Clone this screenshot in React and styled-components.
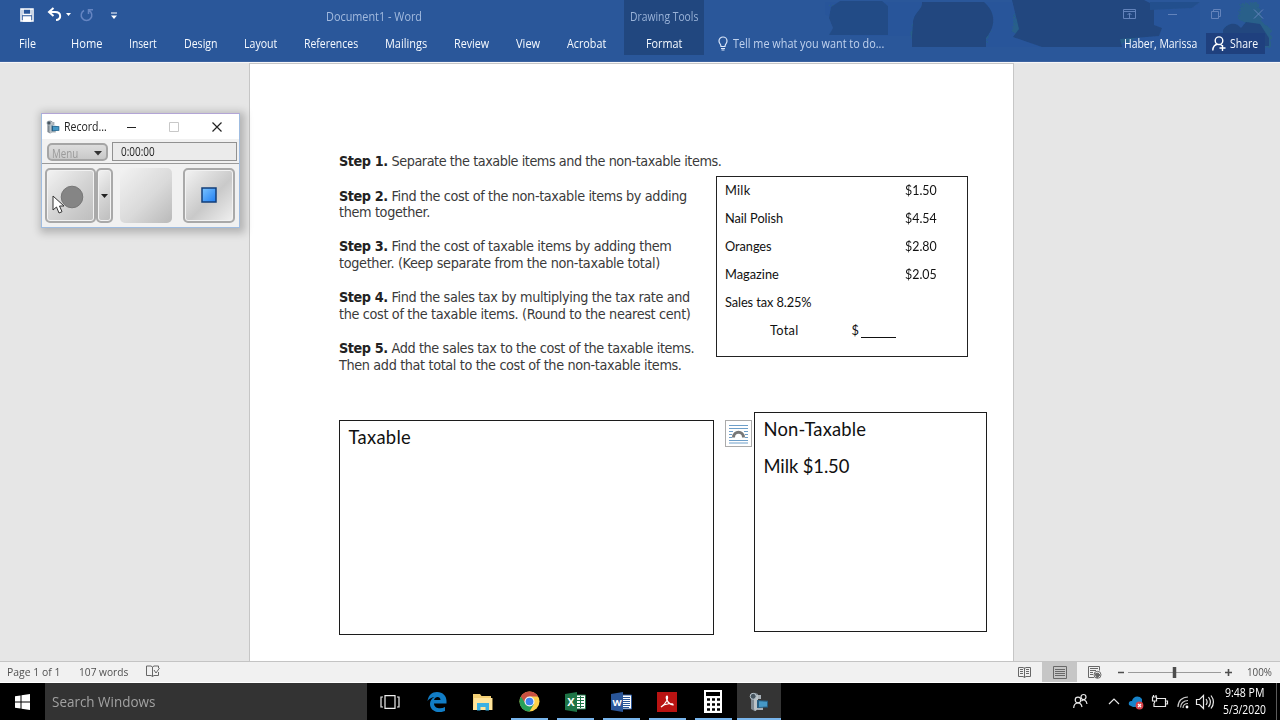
import React, { useLayoutEffect, useRef, useState } from "react";
import styled, { createGlobalStyle } from "styled-components";

const GlobalStyle = createGlobalStyle`
  * { box-sizing: border-box; }
  html, body { margin: 0; padding: 0; }
  body { width: 1280px; height: 720px; overflow: hidden; }
  svg { display: block; flex: none; }
`;

const ui = `"Open Sans", "Noto Sans", sans-serif`;
const body = `Lato, "Open Sans", sans-serif`;

/* Text run set to a fixed advance width: condensed when too wide, tracked otherwise */
const Run = styled.span`
  display: inline-block;
  white-space: pre;
  flex: none;
`;
const Glyphs = styled.span`
  display: inline-block;
  transform-origin: 0 50%;
`;
function Fit({ w, tracked, children, className }) {
  const ref = useRef(null);
  const [fitted, setFitted] = useState({});
  useLayoutEffect(() => {
    const el = ref.current;
    const natural = el.offsetWidth;
    if (!tracked && w / natural < 0.97) {
      setFitted({ transform: `scaleX(${w / natural})` });
    } else {
      setFitted({ letterSpacing: (w - natural) / el.textContent.length });
    }
  }, []);
  return (
    <Run className={className} style={{ width: w }}>
      <Glyphs ref={ref} style={fitted}>{children}</Glyphs>
    </Run>
  );
}

const Screen = styled.div`
  position: relative;
  width: 1280px;
  height: 720px;
  display: flex;
  flex-direction: column;
  overflow: hidden;
  font-family: ${ui};
  font-size: 12px;
`;

/* ---------- Ribbon ---------- */
const Ribbon = styled.header`
  position: relative;
  height: 62px;
  flex: none;
  background: #2a579a;
  color: #f6faff;
  border-bottom: 1px solid #3b62a0;
`;
const Smudges = styled.svg`
  position: absolute;
  left: 800px;
  top: 0;
`;
const RibbonContent = styled.div`
  position: relative;
  display: flex;
  height: 61px;
`;
const RibbonLeft = styled.div`
  width: 624px;
  display: flex;
  flex-direction: column;
`;
const TitleRow = styled.div`
  height: 31px;
  display: flex;
  align-items: center;
  padding-left: 20px;
`;
const Quick = styled.div`
  display: flex;
  align-items: center;
  width: 306px;
  height: 30px;
  padding-bottom: 2px;
`;
const DocTitle = styled.div`
  color: #a3bbdf;
  line-height: 16px;
  padding-top: 2px;
`;
const Tabs = styled.nav`
  display: flex;
  gap: 26.9px;
  padding: 5px 0 0 19px;
  line-height: 16px;
`;
const Tab = styled(Fit)`
  &:first-child { margin-right: 8px; }
`;
const ContextTab = styled.div`
  width: 80px;
  height: 55px;
  background: #21477f;
  display: flex;
  flex-direction: column;
  align-items: center;
  line-height: 16px;
  padding-top: 9px;
  gap: 11px;
`;
const Dim = styled.span`
  color: #9ab3d8;
`;
const RibbonRight = styled.div`
  flex: 1;
  display: flex;
  flex-direction: column;
`;
const WindowButtons = styled.div`
  height: 33px;
  display: flex;
  justify-content: flex-end;
  padding: 8px 15px 0 0;
`;
const Account = styled.div`
  display: flex;
  align-items: center;
  height: 21px;
  padding-left: 13px;
`;
const TellMe = styled.div`
  display: flex;
  align-items: center;
  gap: 4px;
  width: 407px;
  color: #c0d2ee;
`;
const Share = styled.div`
  display: flex;
  align-items: center;
  gap: 4px;
  margin-left: 9px;
  width: 59px;
  height: 21px;
  padding-left: 6px;
  background: #1f407e;
`;

/* ---------- Document ---------- */
const Workspace = styled.main`
  height: 599px;
  flex: none;
  padding-left: 249px;
  background: #e6e6e6;
  border-top: 1px solid #f6f6f8;
`;
const Page = styled.article`
  width: 765px;
  height: 598px;
  background: #fff;
  border: 1px solid #c6c6c6;
  border-bottom: 0;
  padding: 89px 26px 0 89px;
`;
const Upper = styled.section`
  display: flex;
  height: 259px;
`;
const Steps = styled.div`
  width: 377px;
  flex: none;
  font: 14.3px/16.3px "DejaVu Sans Condensed", "DejaVu Sans", sans-serif;
  font-stretch: condensed;
  color: #3a3a3a;
`;
const Step = styled.p`
  margin: 0 0 18.3px;
  display: flex;
  flex-direction: column;
  align-items: flex-start;
`;
const Line = styled.span`
  display: flex;
  height: 16.3px;
`;
const StepName = styled(Fit)`
  font-weight: 700;
  color: #222;
`;
const Receipt = styled.div`
  width: 252px;
  height: 181px;
  margin-top: 23px;
  flex: none;
  border: 1px solid #222;
  padding: 5px 30px 0 8px;
  font: 12.8px/16px ${body};
  color: #111;
`;
const Item = styled.div`
  display: flex;
  justify-content: space-between;
  height: 28.1px;
`;
const Total = styled.div`
  display: flex;
  padding-left: 45px;
  gap: 53px;
`;
const Blank = styled.span`
  display: inline-block;
  width: 35px;
  height: 12px;
  margin-left: 2px;
  vertical-align: -3px;
  border-bottom: 1px solid #111;
`;
const Lower = styled.section`
  display: flex;
  align-items: flex-start;
`;
const SortBox = styled.div`
  width: ${(p) => p.$w}px;
  height: ${(p) => p.$h}px;
  margin-top: ${(p) => p.$top}px;
  border: 1px solid #1c1c1c;
  padding: 4px 9px 0 8.5px;
  font: 18.4px/24px ${body};
  color: #111;
  display: flex;
  flex-direction: column;
  align-items: flex-start;
  gap: 13px;
  flex: none;
`;
const LayoutOptions = styled.div`
  width: 27px;
  height: 27px;
  margin: 8px 2px 0 11px;
  border: 1px solid #ababab;
  background: #fff;
  padding: 2px;
  flex: none;
`;

/* ---------- Status bar ---------- */
const StatusBar = styled.footer`
  height: 22px;
  flex: none;
  background: #f1f1f1;
  border-top: 1px solid #c4c4c4;
  border-bottom: 1px solid #fff;
  display: flex;
  align-items: center;
  padding-left: 7px;
  font-size: 11px;
  color: #505050;
`;
const StatusLeft = styled.div`
  display: flex;
  align-items: center;
  gap: 19px;
  width: 1000px;
  flex: none;
  padding-bottom: 1px;
`;
const ViewButton = styled.div`
  width: 35px;
  height: 20px;
  flex: none;
  display: flex;
  align-items: center;
  justify-content: center;
  background: ${(p) => (p.$on ? "#c6c6c6" : "transparent")};
`;
const Zoom = styled.div`
  display: flex;
  align-items: center;
  margin-left: 3px;
  gap: 14px;
  padding-bottom: 1px;
`;

/* ---------- Taskbar ---------- */
const Taskbar = styled.footer`
  height: 37px;
  flex: none;
  display: flex;
  background: #000;
  color: #fff;
`;
const Start = styled.div`
  width: 45px;
  padding: 11px 0 0 15px;
`;
const Search = styled.div`
  width: 322px;
  margin-right: 2px;
  background: #333;
  color: #a2a2a2;
  font-size: 14.5px;
  line-height: 37px;
  padding-left: 7px;
`;
const Slot = styled.div`
  width: 46px;
  display: flex;
  align-items: center;
  justify-content: center;
  background: ${(p) => (p.$active ? "#343434" : "transparent")};
  background-clip: content-box;
  padding: 0 2px 0 0;
  position: relative;
  &::after {
    content: "";
    display: ${(p) => (p.$open ? "block" : "none")};
    position: absolute;
    bottom: 0;
    left: ${(p) => (p.$active ? 0 : 4)}px;
    right: ${(p) => (p.$active ? 2 : 5)}px;
    height: 2px;
    background: #78b5ec;
  }
`;
const Tray = styled.div`
  flex: 1;
  display: flex;
  align-items: center;
  padding-left: 290px;
`;
const Clock = styled.div`
  width: 60px;
  height: 37px;
  flex: none;
  display: flex;
  flex-direction: column;
  align-items: center;
  justify-content: center;
  line-height: 17px;
  padding: 0 4px 2px 0;
  border-right: 1px solid #5a5a5a;
  font-size: 12px;
`;

/* ---------- Recorder window ---------- */
const Recorder = styled.div`
  position: absolute;
  left: 41px;
  top: 113px;
  width: 199px;
  height: 115px;
  border: 1px solid #9fbce0;
  border-top-color: #b3a5d6;
  background: #f1f1f1;
  box-shadow: 2px 2px 8px 3px rgba(0, 0, 0, 0.22);
  color: #222;
`;
const RecTitle = styled.div`
  height: 25px;
  background: #fff;
  display: flex;
  align-items: center;
  padding-left: 4px;
  svg:first-child { margin-right: 4px; }
`;
const RecBar = styled.div`
  height: 25px;
  border-bottom: 1px solid #9a9a9a;
  display: flex;
  align-items: flex-start;
  padding: 3px 2px 0 5px;
  gap: 4px;
`;
const Menu = styled.div`
  width: 61px;
  height: 18px;
  margin-top: 1px;
  border: 2px solid #a5a5a5;
  border-radius: 5px;
  background: linear-gradient(#ddd, #c9c9c9);
  color: #9a9a9a;
  display: flex;
  align-items: center;
  justify-content: space-between;
  padding: 2px 4px 0 3px;
`;
const Timer = styled.div`
  width: 126px;
  height: 19px;
  border: 1px solid #919191;
  background: #ebebeb;
  padding-left: 8px;
  line-height: 17px;
`;
const RecButtons = styled.div`
  display: flex;
  padding: 4px 3px 0;
`;
const RecButton = styled.div`
  width: ${(p) => p.$w}px;
  height: 55px;
  margin-left: ${(p) => p.$gap || 0}px;
  border: ${(p) => (p.$flat ? 0 : 2)}px solid #a9a9a9;
  border-radius: 5px;
  background: linear-gradient(135deg, #f3f3f3, ${(p) => p.$mid || "#d2d2d2"} 55%, ${(p) => p.$end || "#bdbdbd"});
  box-shadow: ${(p) => (p.$flat ? "none" : "inset 0 0 0 1px #f2f2f2")};
  display: flex;
  align-items: center;
  justify-content: center;
`;
const Pointer = styled.svg`
  position: absolute;
  left: 52px;
  top: 195px;
`;

function Camcorder({ size }) {
  return (
    <svg width={size} height={size} viewBox="0 0 20 20">
      <path d="M2 2.5 6 .8 9 2v15l-3 2.2L2 17z" fill="#7d8891" />
      <path d="M5 3h4v14l-3 2-1-2z" fill="#bac2c7" />
      <circle cx="4.2" cy="4.3" r="3" fill="#475560" stroke="#bac6ce" />
      <path d="M9 3h3v4H9zM9 15h5v3H8z" fill="#a6afb6" />
      <path d="m8 8 11 .8v6.7L8 16z" fill="#265d82" />
      <path d="m10 9.2 8 .6v4.8l-8 .3z" fill="#4598c6" />
    </svg>
  );
}

function RibbonBar() {
  return (
    <Ribbon>
      <Smudges width="480" height="61">
        <defs>
          <filter id="rough" x="-10%" y="-10%" width="120%" height="120%">
            <feTurbulence type="fractalNoise" baseFrequency=".45" numOctaves="2" seed="4" />
            <feDisplacementMap in="SourceGraphic" scale="7" />
          </filter>
          <filter id="soft"><feGaussianBlur stdDeviation=".6" /></filter>
        </defs>
        <path d="M25 2H400V47H112V36H50V28L25 14z" fill="#28559a" />
        <g filter="url(#rough)">
          <path d="M32 5h50v18H31zM123 6l60-2 8 17-3 19-10 4h-63l-5-12zM218 3h132v30l-25 10H235l-23-11zM442 3h16l5 20 8 6v18h-24V24l-9-5z" fill="#24677d" opacity=".55" />
        </g>
        <g filter="url(#soft)">
          <path d="M31 7 40 1h42l6 5v29H29l4-7-4-10z" fill="#234b86" />
          <path d="M113 24c0-12 10-14 9-22h62c15 13 9 28 2 36v9h-74V36z" fill="#21477f" />
          <path d="M212 0h132l10 5v20l8 3-3 8-39 3 2 8h-80l-29-10 6-8z" fill="#21477f" />
          <path d="M350 2h50l-8 6-42 2z" fill="#24508d" />
          <path d="M423 30c4-7 13-9 18-2l5-6 14 2 9 14v8h-46z" fill="#21477f" />
        </g>
      </Smudges>
      <RibbonContent>
        <RibbonLeft>
          <TitleRow>
            <Quick>
              <svg width="14" height="14" viewBox="0 0 14 14" fill="none" stroke="#fff" strokeWidth="1.5">
                <path d="M1 1h12v12H1zM3 1v5.5h8V1" /><path d="M3.5 9h7v4h-7zM5.5 11v2" fill="#fff" />
              </svg>
              <svg width="24" height="16" viewBox="0 0 24 16" style={{ marginLeft: 13 }}>
                <path d="M6.500 1 2 5l4.500 4M2.500 5H8c7 0 6.500 8 1 8" fill="none" stroke="#fff" strokeWidth="2" />
                <path d="M19 6h5l-2.500 3z" fill="#fff" />
              </svg>
              <svg width="14" height="14" viewBox="0 0 14 14" style={{ marginLeft: 9 }}>
                <path d="M4 2.500a5.300 5.300 0 1 0 5 0M8.500 6V1.700H13" fill="none" stroke="#6585c2" strokeWidth="1.500" />
              </svg>
              <svg width="8" height="8" viewBox="0 0 8 8" style={{ marginLeft: 16, marginTop: 3 }}>
                <path d="M1 1h6" stroke="#fff" /><path d="M1 3.500h6L4 7z" fill="#fff" />
              </svg>
            </Quick>
            <DocTitle><Fit w={96}>Document1 - Word</Fit></DocTitle>
          </TitleRow>
          <Tabs>
            <Tab w={17}>File</Tab><Tab w={31.5}>Home</Tab><Tab w={27.5}>Insert</Tab>
            <Tab w={33.5}>Design</Tab><Tab w={33.5}>Layout</Tab><Tab w={54}>References</Tab>
            <Tab w={42}>Mailings</Tab><Tab w={35}>Review</Tab><Tab w={24}>View</Tab><Tab w={39.5}>Acrobat</Tab>
          </Tabs>
        </RibbonLeft>
        <ContextTab>
          <Dim><Fit w={68}>Drawing Tools</Fit></Dim>
          <Fit w={36}>Format</Fit>
        </ContextTab>
        <RibbonRight>
          <WindowButtons>
            <svg width="142" height="14" viewBox="0 0 142 14" fill="none" stroke="#6383bb">
              <path d="M.5 1.500h12v9H.5zM.5 3.500h12M6.500 10V5M4.500 7l2-2 2 2M45 6.500h9M88.500 3.500h7v7h-7zM90.500 3V1.500h7v7H96M131 1.500l9 9M140 1.500l-9 9" />
            </svg>
          </WindowButtons>
          <Account>
            <TellMe>
              <svg width="12" height="15" viewBox="0 0 12 15" fill="none" stroke="#dce8fb" strokeWidth="1.200">
                <path d="M4 10.500C4 8 2 7.500 2 5a4 4 0 0 1 8 0c0 2.500-2 3-2 5.500zM4 12.500h4M4.500 14h3" />
              </svg>
              <Fit w={151}>Tell me what you want to do...</Fit>
            </TellMe>
            <Fit w={73}>Haber, Marissa</Fit>
            <Share>
              <svg width="14" height="15" viewBox="0 0 14 15" fill="none" stroke="#fff" strokeWidth="1.400">
                <circle cx="7" cy="4.700" r="3.800" /><path d="M.8 14.500c.2-4 2.200-6 5-6.200M8.500 8.500l1.500 1M10.500 9v6M7.500 12h6" />
              </svg>
              <Fit w={28}>Share</Fit>
            </Share>
          </Account>
        </RibbonRight>
      </RibbonContent>
    </Ribbon>
  );
}

const STEPS = [
  [["Separate the taxable items and the non-taxable items.", 330]],
  [["Find the cost of the non-taxable items by adding", 295.5], ["them together.", 91]],
  [["Find the cost of taxable items by adding them", 279.5], ["together. (Keep separate from the non-taxable total)", 321.5]],
  [["Find the sales tax by multiplying the tax rate and", 298], ["the cost of the taxable items. (Round to the nearest cent)", 352]],
  [["Add the sales tax to the cost of the taxable items.", 302.5], ["Then add that total to the cost of the non-taxable items.", 343]],
];
const ITEMS = [
  ["Milk", 25, "$1.50"], ["Nail Polish", 58.5, "$4.54"], ["Oranges", 46.5, "$2.80"],
  ["Magazine", 54, "$2.05"], ["Sales tax 8.25%", 86.5, null],
];

function Document() {
  return (
    <Workspace>
      <Page>
        <Upper>
          <Steps>
            {STEPS.map((lines, i) => (
              <Step key={i}>
                {lines.map(([text, w], n) => (
                  <Line key={n}>
                    {n === 0 && <StepName tracked w={52.5}>{`Step ${i + 1}. `}</StepName>}
                    <Fit tracked w={w}>{text}</Fit>
                  </Line>
                ))}
              </Step>
            ))}
          </Steps>
          <Receipt>
            {ITEMS.map(([name, w, price]) => (
              <Item key={name}><Fit w={w}>{name}</Fit>{price && <Fit w={32}>{price}</Fit>}</Item>
            ))}
            <Total><Fit w={28.5}>Total</Fit><span>$<Blank /></span></Total>
          </Receipt>
        </Upper>
        <Lower>
          <SortBox $w={375} $h={215} $top={8}><Fit w={63}>Taxable</Fit></SortBox>
          <LayoutOptions>
            <svg width="21" height="21" viewBox="0 0 21 21">
              <path d="M1 2.500h19M1 5.500h19M1 8.500h4M16 8.500h4M1 11.500h3M17 11.500h3M1 14.500h3M17 14.500h3M1 17.500h19M1 20h19" stroke="#6e9fc9" />
              <path d="M5.500 14.500c0-7 10-7 10 0" fill="none" stroke="#777" strokeWidth="3" />
            </svg>
          </LayoutOptions>
          <SortBox $w={233} $h={220} $top={0}>
            <Fit w={103}>Non-Taxable</Fit>
            <Fit w={86}>Milk $1.50</Fit>
          </SortBox>
        </Lower>
      </Page>
    </Workspace>
  );
}

function Status() {
  return (
    <StatusBar>
      <StatusLeft>
        <Fit w={53}>Page 1 of 1</Fit>
        <Fit w={49}>107 words</Fit>
        <svg width="14" height="13" viewBox="0 0 14 13" fill="none" stroke="#666" style={{ marginLeft: -1 }}>
          <path d="M6.500 2v9.500M6.500 2 5 1H.5v9.500H5l1.500 1M6.500 2 8 1h4.500v2M8 5l2 3 3.500-5M8 10.500h4.500V7M6.500 11.500l1.500-1" />
        </svg>
      </StatusLeft>
      <ViewButton>
        <svg width="13" height="12" viewBox="0 0 13 12" fill="none" stroke="#686868">
          <path d="M6.500 1.500v10L5 10.500H.5v-9H5l1.500 1 1.500-1h4.500v9H8l-1.500 1M2 3.500h3M2 5.500h3M2 7.500h3M8 3.500h3M8 5.500h3M8 7.500h3" />
        </svg>
      </ViewButton>
      <ViewButton $on>
        <svg width="14" height="13" viewBox="0 0 14 13" fill="none" stroke="#686868">
          <path d="M.5.5h13v12H.5zM2 3.500h10M2 5.500h10M2 7.500h10M2 9.500h10" />
        </svg>
      </ViewButton>
      <ViewButton>
        <svg width="14" height="13" viewBox="0 0 14 13" fill="none" stroke="#686868">
          <path d="M6 11.500H.5V.5h11v4M2 2.500h8M2 4.500h6M2 6.500h3M2 8.500h3" /><circle cx="9.500" cy="8.800" r="3.500" /><path d="m7 8 3-1 2 2-3 3z" fill="#686868" />
        </svg>
      </ViewButton>
      <Zoom>
        <svg width="118" height="12" viewBox="0 0 118 12" stroke="#4d4d4d">
          <path d="M3 6.500h6M110 6.500h7M113.500 3v7" strokeWidth="1.600" />
          <path d="M13 6.500h93" stroke="#9a9a9a" /><path d="M59.500 1v11" strokeWidth="3.500" />
        </svg>
        <Fit w={25}>100%</Fit>
      </Zoom>
    </StatusBar>
  );
}

function OfficeIcon({ color, letter }) {
  return (
    <svg width="21" height="20" viewBox="0 0 21 20">
      <path d="M10 3h10.500v14H10z" fill="#fff" stroke={color} />
      <path d={letter === "X" ? "M12 5.500h7M12 8.500h7M12 11.500h7M12 14.500h7M15.500 4v12" : "M12 5.500h7M12 7.500h7M12 9.500h7M12 11.500h7M12 13.500h7M12 15.500h6"} stroke={color} />
      <path d="m0 2 12-2v20L0 18z" fill={color} />
      <text x="6" y="14" textAnchor="middle" fontFamily="Open Sans" fontWeight="700" fontSize={letter === "X" ? 11 : 9.5} fill="#fff">{letter}</text>
    </svg>
  );
}

function WindowsBar() {
  return (
    <Taskbar>
      <Start>
        <svg width="15" height="16" viewBox="0 0 15 16" fill="#fff">
          <path d="m0 2.300 5.500-.8v6H0zM6.500 1.300 15 0v7.500H6.500zM0 8.500h5.500v6L0 13.700zM6.500 8.500H15V16l-8.500-1.300z" />
        </svg>
      </Start>
      <Search><Fit w={103}>Search Windows</Fit></Search>
      <Slot>
        <svg width="20" height="14" viewBox="0 0 20 14" fill="none" stroke="#eee" strokeWidth="1.200" style={{ marginRight: 2 }}>
          <path d="M5 .7h10v12.600H5zM3 2H1v10h2M17 2h2v10h-2" />
        </svg>
      </Slot>
      <Slot>
        <svg width="20" height="20" viewBox="0 0 20 20">
          <path d="M.5 9C1.500 3 5 0 10 0c6 0 9.500 4 9.500 9v2.500H7c.3 5 6.500 6 11 3.500v4c-7 3-15 0-15-7 0-3 1.500-5.500 4.500-7C4 5.500 2 7 .5 9zM7 8h6.500c0-4-5.500-4-6.500 0z" fill="#117dc6" fillRule="evenodd" />
        </svg>
      </Slot>
      <Slot>
        <svg width="20" height="18" viewBox="0 0 20 18">
          <path d="M0 1h7l1.500 2H18v2h1.500v12H0z" fill="#f3cf73" /><path d="M1 5h18v12H0z" fill="#ffe49b" />
          <path d="M4 10h12v7.500h-3.500V14h-5v3.500H4z" fill="#3bb1e4" />
        </svg>
      </Slot>
      <Slot $open>
        <svg width="21" height="21" viewBox="0 0 42 42">
          <circle cx="21" cy="21" r="20" fill="#fdd14b" />
          <path d="M21 21 3.700 11A20 20 0 0 0 21 41l9-15z" fill="#28a05a" />
          <path d="M3.700 11a20 20 0 0 1 34.600 0H21l-8 14z" fill="#c95142" />
          <circle cx="21" cy="21" r="10" fill="#f5f5f5" /><circle cx="21" cy="21" r="7.700" fill="#3f83ef" />
        </svg>
      </Slot>
      <Slot $open><OfficeIcon color="#1e7446" letter="X" /></Slot>
      <Slot $open><OfficeIcon color="#2a5699" letter="W" /></Slot>
      <Slot $open>
        <svg width="20" height="20" viewBox="0 0 20 20">
          <path d="M0 0h20v20H0z" fill="#b91312" />
          <path d="M4 15c4-2 8-9 6-11-2 0 0 8 6 9 1-2-8-2-12 2z" fill="none" stroke="#fff" strokeWidth="1.200" />
        </svg>
      </Slot>
      <Slot $open>
        <svg width="18" height="23" viewBox="0 0 18 23">
          <path d="M0 0h18v23H0z" fill="#fff" /><path d="M2 2h14v4H2z" />
          <path d="M3 9.500h13M3 14.500h13M3 19.500h13" stroke="#000" strokeWidth="2.500" strokeDasharray="3 2" />
        </svg>
      </Slot>
      <Slot $open $active><Camcorder size={20} /></Slot>
      <Tray>
        <svg width="144" height="20" viewBox="0 0 144 20" fill="none" stroke="#e8e8e8" strokeWidth="1.200">
          <circle cx="5" cy="8" r="2.800" /><circle cx="10.500" cy="5" r="2.500" /><path d="M.7 16c.2-6 7-7 8.300-1M8.500 9c2-2 5-1 5.500 3" />
          <path d="m36 12 5-5 5 5" />
          <path d="M56 13c-1-4 2-4 3-4 1-5 7-6 10-2v8H60z" fill="#1783c9" stroke="none" />
          <circle cx="66.500" cy="13.500" r="3.900" fill="#d8434b" stroke="none" /><path d="m65 12 3 3m0-3-3 3" stroke="#fff" />
          <path d="M84 6.500h8.500v8H81V11M93 9h1.500v3H93M79.500 5v4h4V5zM80.500 3v2M83 3v2M81.500 9v2" />
          <path d="M105 15C105 9 109 5 115 5M107.500 15.500c0-4 3-7 7.500-7M110 16c0-2.500 2-4.500 5-4.500" stroke="#c9c9c9" /><circle cx="114" cy="15" r="1.400" fill="#fff" stroke="none" />
          <path d="M123.500 7.500h3l4-4v13l-4-4h-3zM133 7c1.500 2 1.500 4 0 6M135.500 5c2.500 3.500 2.500 7 0 10M138 3.500c3 4 3 9 0 13" />
        </svg>
        <Clock><Fit w={39.5}>9:48 PM</Fit><Fit w={43}>5/3/2020</Fit></Clock>
      </Tray>
    </Taskbar>
  );
}

function RecorderWindow() {
  return (
    <Recorder>
      <RecTitle>
        <Camcorder size={14} />
        <Fit w={43}>Record...</Fit>
        <svg width="100" height="12" viewBox="0 0 100 12" fill="none" stroke="#222" style={{ marginLeft: 18 }}>
          <path d="M2 6.500h9M87.500 1.500l9 9M96.500 1.500l-9 9" strokeWidth="1.200" /><path d="M44.500 1.500h9v9h-9z" stroke="#c8c8c8" />
        </svg>
      </RecTitle>
      <RecBar>
        <Menu><Fit w={26}>Menu</Fit><svg width="8" height="5"><path d="M0 0h8L4 4.500z" fill="#333" /></svg></Menu>
        <Timer><Fit w={34}>0:00:00</Fit></Timer>
      </RecBar>
      <RecButtons>
        <RecButton $w={51}><svg width="24" height="24" style={{ marginLeft: 2, marginTop: 3 }}><circle cx="12" cy="12" r="10.800" fill="#858585" stroke="#777" /></svg></RecButton>
        <RecButton $w={17}><svg width="7" height="4"><path d="M0 0h7L3.500 4z" fill="#222" /></svg></RecButton>
        <RecButton $w={52} $gap={7} $flat $mid="#dadada" $end="#b9b9b9" />
        <RecButton $w={52} $gap={11} $mid="#c9c9c9" $end="#f0f0f0">
          <svg width="16" height="16" viewBox="0 0 16 16" style={{ marginBottom: 2, marginRight: 1 }}>
            <defs><linearGradient id="stop" x2="1" y2="1"><stop stopColor="#7bc4ff" /><stop offset="1" stopColor="#1f7df2" /></linearGradient></defs>
            <path d="M1 1h14v14H1z" fill="url(#stop)" stroke="#123e79" strokeWidth="1.500" />
          </svg>
        </RecButton>
      </RecButtons>
    </Recorder>
  );
}

export default function App() {
  return (
    <Screen>
      <GlobalStyle />
      <RibbonBar />
      <Document />
      <Status />
      <WindowsBar />
      <RecorderWindow />
      <Pointer width="14" height="20" viewBox="0 0 14 20">
        <path d="M1 1v14l3.500-3 2.500 6 3-1.300L7.500 11H12z" fill="#fff" stroke="#333" />
      </Pointer>
    </Screen>
  );
}
